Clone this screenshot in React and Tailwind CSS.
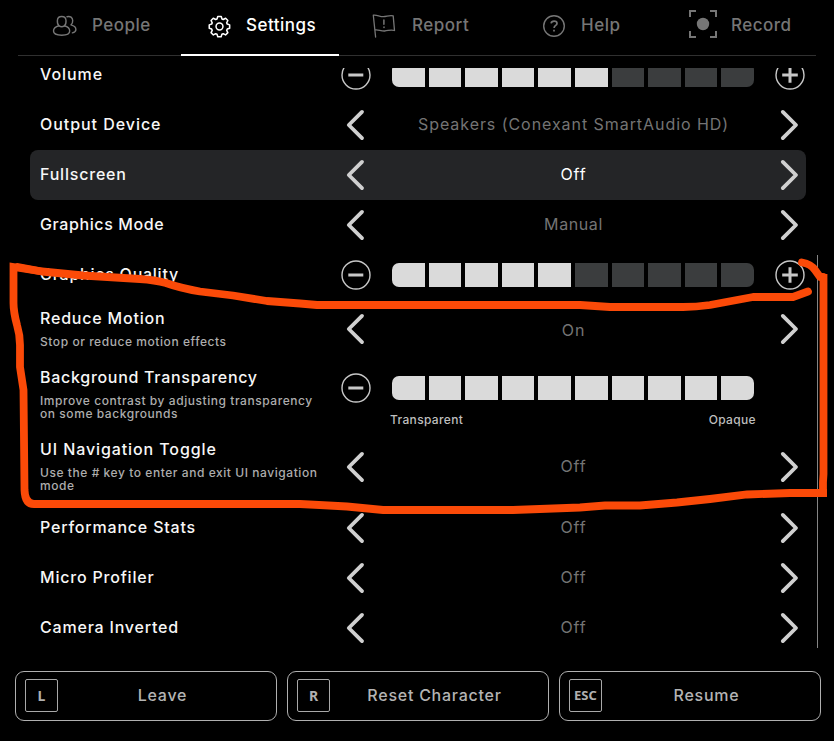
const SEGMENTS = [0, 1, 2, 3, 4, 5, 6, 7, 8, 9];

function PeopleIcon() {
  return (
    <svg width="26" height="22" viewBox="0 0 26 22" fill="none" stroke="currentColor" strokeWidth="1.4" strokeLinecap="round" strokeLinejoin="round">
      <path d="M7 10.800C5.600 9.700 5.200 7.600 5.400 5.300 5.600 2.900 7 1.500 9.700 1.500s4.100 1.400 4.300 3.800c.2 2.300-.2 4.400-1.600 5.500" />
      <path d="M7 10.800c1.700 1.100 3.700 1.100 5.400 0 3.300.9 5.300 3 5.300 5.200 0 2.900-3.600 4.200-8 4.200s-8.200-1.300-8.200-4.200c0-2.200 2.200-4.300 5.500-5.200z" />
      <path d="M15 1.700c3.400-.8 5.600.8 5.700 3.900.1 1.900-.4 3.400-1.700 4.300 3 .8 4.900 2.500 4.900 4.700 0 1.700-1.300 2.900-3.500 3.300" />
    </svg>
  );
}

function GearIcon() {
  return (
    <svg width="23" height="23" viewBox="0 0 24 24" fill="none" stroke="currentColor" strokeWidth="1.600" strokeLinejoin="round">
      <path d="M10.200 1.500h3.600l.8 2.600 1.300.6 2.500-1.300 2.300 2.300-1.200 2.500.6 1.300 2.500.8v3.500l-2.500.9-.6 1.300 1.200 2.400-2.400 2.400-2.400-1.300-1.400.6-.8 2.500h-3.500l-.8-2.500-1.400-.6-2.400 1.300-2.400-2.400 1.200-2.400-.6-1.300-2.500-.9v-3.500l2.500-.8.6-1.300-1.200-2.500 2.300-2.300L8 4.700l1.400-.6z" />
      <circle cx="12" cy="12" r="3.600" />
    </svg>
  );
}

function FlagIcon() {
  return (
    <svg width="24" height="26" viewBox="0 0 24 26" fill="none" stroke="currentColor" strokeWidth="1.300" strokeLinecap="round" strokeLinejoin="round">
      <path d="M3.600 24 1.300 2.200c3.500-.7 6.200 1.600 10.200 1.500 3.300-.1 5.900-1.700 9.700-.8l1.300 14.600c-3.800-1.300-6.200.3-9.800.5-4 .2-6.300-1.500-9.700-1" />
      <path d="M11.900 7v4.200M12 14v.4" strokeWidth="1.500" />
    </svg>
  );
}

function HelpIcon() {
  return (
    <svg width="24" height="24" viewBox="0 0 24 24" fill="none" stroke="currentColor" strokeWidth="1.400">
      <circle cx="12" cy="12" r="10.300" />
      <path d="M9.100 9.300c.3-1.500 1.500-2.200 3-2.200 1.700 0 2.900.9 2.900 2.300 0 2.100-2.900 2-2.900 4.500M12 15.700v1.700" strokeWidth="1.700" />
    </svg>
  );
}

function RecordIcon() {
  return (
    <svg className="mb-[4px]" width="28" height="28" viewBox="0 0 28 28" fill="none" stroke="currentColor" strokeWidth="2">
      <path d="M1 7V1h6M21 1h6v6M27 21v6h-6M7 27H1v-6" />
      <circle cx="14" cy="14" r="6.200" fill="currentColor" stroke="none" />
    </svg>
  );
}

function Tab({ icon, label, className, labelClass = "ml-[14px]", active }) {
  return (
    <div className={`relative flex h-[55px] w-[160px] shrink-0 items-center pb-[3px] tracking-[0.5px] ${active ? "text-white" : "text-[#767676]"} ${className}`}>
      <span className="flex w-7 shrink-0 justify-center">{icon}</span>
      <span className={`pb-[2px] text-[17px] leading-6 font-medium whitespace-nowrap ${labelClass}`}>{label}</span>
      {active && <span className="absolute top-[54px] left-px h-[2px] w-[158px] bg-white" />}
    </div>
  );
}

function Chevron({ right }) {
  return (
    <svg width="30" height="32" viewBox="0 0 30 32" fill="none" stroke="#d0d0d0" strokeWidth="3.800" strokeLinecap="round" strokeLinejoin="round">
      <path d={right ? "M7.800 2.900 21 16 7.800 29.100" : "M21 2.900 7.800 16 21 29.100"} />
    </svg>
  );
}

function RoundButton({ plus }) {
  return (
    <svg width="30" height="30" viewBox="0 0 30 30" fill="none" stroke="#c8c8c8">
      <circle cx="15" cy="15" r="14" strokeWidth="1.400" />
      <path d={plus ? "M7.200 15h15.600M15 7.200v15.600" : "M7.300 15h15"} strokeWidth="3" />
    </svg>
  );
}

function Slider({ value }) {
  return (
    <div className="flex h-6 gap-[4px] overflow-hidden rounded-[7px]">
      {SEGMENTS.map((n) => (
        <div key={n} className={`flex-1 ${n < value ? "bg-[#dadada]" : "bg-[#3b3d3e]"}`} />
      ))}
    </div>
  );
}

function Row({ label, tracking = "tracking-[0.8px]", desc, value, valueClass = "pb-[2px] tracking-[0.8px]", slider, ends, noPlus, selected, height = "h-[50px]" }) {
  const isSlider = slider !== undefined;
  return (
    <div className={`flex shrink-0 rounded-lg pl-[10px] ${height} ${selected ? "bg-[#242527]" : ""} ${ends ? "items-start" : "items-center"}`}>
      <div className={`w-[301px] shrink-0 ${desc ? "self-start pt-[7px]" : "pb-[2px]"}`}>
        <div className={`text-[16px] leading-[22px] font-medium whitespace-nowrap text-[#f7f7f7] ${tracking}`}>{label}</div>
        {desc && (
          <div className="w-[282px] pt-[6px] text-[12px] leading-[13px] font-medium tracking-[0.560px] text-[#adadad]">{desc}</div>
        )}
      </div>
      <div className={`flex w-[30px] shrink-0 justify-center ${ends ? "pt-[14px]" : ""}`}>
        {isSlider ? <RoundButton /> : <Chevron />}
      </div>
      <div className={`mx-[21px] w-[362px] shrink-0 ${ends ? "pt-[17px]" : ""}`}>
        {isSlider ? (
          <Slider value={slider} />
        ) : (
          <div className={`pl-px text-center text-[16px] leading-[22px] whitespace-nowrap ${selected ? "text-white" : "text-[#747474]"} ${valueClass}`}>{value}</div>
        )}
        {ends && (
          <div className="-mx-[2px] flex justify-between pt-[12px] text-[12px] leading-4 font-medium text-[#bebebe]">
            <span className="tracking-[0.350px]">Transparent</span>
            <span className="tracking-[0.350px]">Opaque</span>
          </div>
        )}
      </div>
      <div className="flex w-[30px] shrink-0 justify-center">
        {isSlider ? !noPlus && <RoundButton plus /> : <Chevron right />}
      </div>
    </div>
  );
}

function FooterButton({ hotkey, keyClass, label }) {
  return (
    <div className="flex h-[50px] w-[262px] items-center rounded-[9px] border border-[#b0b0b0] pr-[9px] pb-px pl-[9px]">
      <span className={`flex h-[33px] w-[33px] shrink-0 items-center justify-center rounded-[2px] border-[1.500px] border-[#a8a8a8] font-['Noto_Sans',sans-serif] font-bold text-[#b0b0b0] ${keyClass}`}>{hotkey}</span>
      <span className="flex-1 pb-px text-center text-[16px] leading-[22px] font-medium tracking-[0.750px] whitespace-nowrap text-[#b4b4b4]">{label}</span>
    </div>
  );
}

export default function App() {
  return (
    <div className="relative h-[741px] w-[834px] overflow-hidden bg-black font-['Inter',sans-serif]">
      <header className="mx-[18px] flex h-14 border-b border-[#303030] pl-[2px]">
        <Tab icon={<PeopleIcon />} label="People" className="pl-[31px]" labelClass="ml-[13px]" />
        <Tab icon={<GearIcon />} label="Settings" className="pl-[25px]" labelClass="ml-[13px]" active />
        <Tab icon={<FlagIcon />} label="Report" className="pl-[30px]" />
        <Tab icon={<HelpIcon />} label="Help" className="pl-[40px]" labelClass="ml-[13px]" />
        <Tab icon={<RecordIcon />} label="Record" className="pl-[29px]" />
      </header>

      <main className="mt-3 flex h-[580px]">
        <div className="ml-[30px] h-full w-[776px] overflow-hidden">
          <div className="-mt-[18px] flex flex-col">
            <Row label="Volume" tracking="tracking-[0.950px]" slider={6} />
            <Row label="Output Device" tracking="tracking-[0.950px]" value="Speakers (Conexant SmartAudio HD)" valueClass="pb-[2px] tracking-[0.940px]" />
            <Row label="Fullscreen" value="Off" selected />
            <Row label="Graphics Mode" tracking="tracking-[0.600px]" value="Manual" valueClass="pb-[2px] tracking-[0.600px]" />
            <Row label="Graphics Quality" tracking="tracking-[0.750px]" slider={5} />
            <Row label="Reduce Motion" desc="Stop or reduce motion effects" value="On" valueClass="pt-px tracking-[0.800px]" height="h-[58px] mb-px" />
            <Row
              label="Background Transparency"
              tracking="tracking-[0.710px]"
              desc="Improve contrast by adjusting transparency on some backgrounds"
              slider={10}
              ends
              noPlus
              height="h-[72px]"
            />
            <Row
              label="UI Navigation Toggle"
              tracking="tracking-[0.900px]"
              desc="Use the # key to enter and exit UI navigation mode"
              value="Off"
              height="h-[72px]"
            />
            <Row label="Performance Stats" value="Off" />
            <Row label="Micro Profiler" value="Off" />
            <Row label="Camera Inverted" value="Off" />
          </div>
        </div>
        <div className="mt-[187px] ml-[11px] h-[393px] w-px bg-[#858585]" />
      </main>

      <footer className="mt-[23px] ml-[15px] flex gap-[10px]">
        <FooterButton hotkey="L" keyClass="text-[14px]" label="Leave" />
        <FooterButton hotkey="R" keyClass="text-[14px]" label="Reset Character" />
        <FooterButton hotkey="ESC" keyClass="text-[13px]" label="Resume" />
      </footer>

      <svg className="pointer-events-none absolute inset-0" width="834" height="741" viewBox="0 0 834 741" fill="none" stroke="#fb4a08" strokeWidth="7.800" strokeLinejoin="round">
        <path strokeLinecap="round" d="M808 291.500 793 297h-40L710 305q-14 2-27 2h-73L580 305H317L300 303.500 267 301 233 295.500 200 291.500Q180 288 166 283 155 280 140 279L83 275.500 42 271.500 18 267" />
        <path strokeLinecap="butt" strokeLinejoin="miter" d="M42 271.500 13.500 267V303Q13.500 312 17 325 20 335 20 345V367L23.500 390 24.500 490Q25 504 34 504H300L347 506.500 383 510H513L580 507.500 605 505.500H640L677 502.500 710 499 747 494.500 790 493H827" />
        <path strokeLinecap="butt" d="M823 496.500V482L823.500 474V274" />
        <path strokeLinecap="round" d="M802 262.500Q811 264 815 270L820 277H823" />
      </svg>
    </div>
  );
}
